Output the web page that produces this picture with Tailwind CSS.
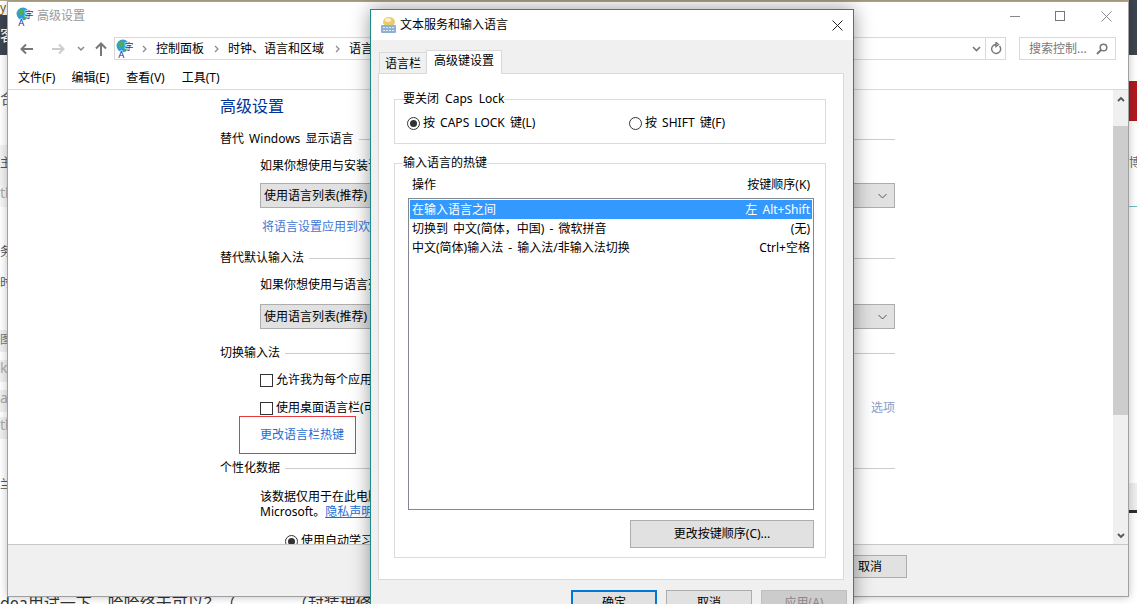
<!DOCTYPE html>
<html lang="en">
<head>
    <meta charset="UTF-8">
    <title>高级设置</title>
    <script src="https://cdn.jsdelivr.net/npm/@tailwindcss/browser@4"></script>
</head>
<body class="relative w-[1137px] h-[604px] overflow-hidden bg-white text-[12px] leading-[16px] text-black font-['Noto_Sans','Noto_Sans_CJK_SC',sans-serif]">

    <!-- page behind the windows -->
    <div class="absolute left-0 top-0 w-[1137px] h-[1px] bg-[#b8ab8e]"></div>
    <div class="absolute left-0 top-0 w-[8px] overflow-hidden text-[#7a5a20]">y</div>
    <div class="absolute left-0 top-[15px] w-[8px] h-[40px] bg-[#3c4550] overflow-hidden text-[16px] text-white pt-[12px]">客</div>
    <div class="absolute left-0 top-[90px] w-[8px] text-[16px] text-[#666] overflow-hidden">合</div>
    <div class="absolute left-0 top-[145px] w-[8px] h-[40px] overflow-hidden text-[#555] bg-[#f2f2f2] pt-[10px]">主</div>
    <div class="absolute left-0 top-[185px] w-[8px] h-[22px] overflow-hidden text-[14px] text-[#aaa] bg-[#f5f5f5]">th</div>
    <div class="absolute left-0 top-[244px] w-[8px] overflow-hidden text-[#555]">务</div>
    <div class="absolute left-0 top-[275px] w-[8px] overflow-hidden text-[#555]">时</div>
    <div class="absolute left-0 top-[330px] w-[8px] h-[22px] overflow-hidden text-[#777] bg-[#f0f0f0] pt-[2px]">图</div>
    <div class="absolute left-0 top-[360px] w-[8px] h-[22px] overflow-hidden text-[14px] text-[#aaa] bg-[#f0f0f0]">k</div>
    <div class="absolute left-0 top-[390px] w-[8px] h-[22px] overflow-hidden text-[14px] text-[#aaa] bg-[#f0f0f0]">a</div>
    <div class="absolute left-0 top-[417px] w-[8px] h-[22px] overflow-hidden text-[14px] text-[#aaa] bg-[#f0f0f0]">th</div>
    <div class="absolute left-0 top-[477px] w-[8px] overflow-hidden text-[#555]">兰</div>
    <div class="absolute left-[1129px] top-0 w-[8px] h-[55px] bg-[#3c4550]"></div>
    <div class="absolute left-[1129px] top-[81px] w-[8px] h-[40px] bg-[#b01a20]"></div>
    <div class="absolute left-[1129px] top-[155px] w-[8px] overflow-hidden text-[#666]">博</div>
    <div class="absolute left-[1129px] top-[206px] w-[8px] h-[1px] bg-[#6fc0bd]"></div>
    <div class="absolute left-[1129px] top-[483px] w-[8px] h-[27px] bg-[#eeeeee]"></div>
    <div class="absolute left-[1129px] top-[510px] w-[8px] h-[3px] bg-[#26323a]"></div>
    <div class="absolute left-0 top-[593px] w-[370px] text-[16px] leading-[20px] text-[#333] whitespace-nowrap">dea用试一下，哈哈终于可以？（<span class="ml-[64px]">（封装理修</span></div>

    <!-- control panel window -->
    <div class="absolute left-[7px] top-[1px] w-[1122px] h-[596px] bg-white border border-[#a0a0a0] shadow-[0_0_8px_rgba(0,0,0,0.25)] flex flex-col">
        <div class="h-[28px] shrink-0 flex items-center pl-[8px]">
            <svg class="w-[18px] h-[19px]" viewBox="0 0 17 18"><circle cx="6.500" cy="6.500" r="6" fill="#2f9be0"/><path d="M2 4l3-3 3 2-2 4-3 1zM7 9l3-1 1 2-3 2z" fill="#4cb050"/><text x="8" y="10" font-size="8.500" fill="#1033a8" stroke="#fff" stroke-width="1" paint-order="stroke">字</text><text x="2" y="18" font-size="9" fill="#1033a8" stroke="#fff" stroke-width="1" paint-order="stroke">A</text></svg>
            <span class="ml-[3px] text-[#999]">高级设置</span>
            <div class="ml-auto flex items-center">
                <div class="w-[10px] h-[1px] bg-[#888] mr-[35px]"></div>
                <div class="w-[10px] h-[10px] border border-[#777] mr-[36px]"></div>
                <svg class="w-[11px] h-[11px] mr-[16px]" viewBox="0 0 11 11"><path d="M.5.5l10 10M10.5.5l-10 10" stroke="#888"/></svg>
            </div>
        </div>
        <div class="h-[25px] shrink-0 flex items-center pl-[12px] pr-[8px] mt-[6px]">
            <svg class="w-[14px] h-[12px]" viewBox="0 0 14 12"><path d="M13 6H2M6 1.500L1.500 6 6 10.500" fill="none" stroke="#777" stroke-width="2"/></svg>
            <svg class="w-[14px] h-[12px] ml-[17px]" viewBox="0 0 14 12"><path d="M1 6h11M8 1.500L12.500 6 8 10.500" fill="none" stroke="#ccc" stroke-width="2"/></svg>
            <svg class="w-[8px] h-[6px] ml-[12px]" viewBox="0 0 8 6"><path d="M1 1l3 3 3-3" fill="none" stroke="#888" stroke-width="1.500"/></svg>
            <svg class="w-[12px] h-[14px] ml-[10px]" viewBox="0 0 12 14"><path d="M6 14V2M1 6.500L6 1.500l5 5" fill="none" stroke="#777" stroke-width="2"/></svg>
            <div class="ml-[7px] h-[23px] w-[892px] border border-[#d9d9d9] flex items-center">
                <svg class="w-[18px] h-[19px] ml-[1px]" viewBox="0 0 17 18"><circle cx="6.500" cy="6.500" r="6" fill="#2f9be0"/><path d="M2 4l3-3 3 2-2 4-3 1zM7 9l3-1 1 2-3 2z" fill="#4cb050"/><text x="8" y="10" font-size="8.500" fill="#1033a8" stroke="#fff" stroke-width="1" paint-order="stroke">字</text><text x="2" y="18" font-size="9" fill="#1033a8" stroke="#fff" stroke-width="1" paint-order="stroke">A</text></svg>
                <svg class="w-[5px] h-[8px] ml-[8px]" viewBox="0 0 5 8"><path d="M1 1l3 3-3 3" fill="none" stroke="#888" stroke-width="1.200"/></svg>
                <span class="ml-[9px]">控制面板</span>
                <svg class="w-[5px] h-[8px] ml-[10px]" viewBox="0 0 5 8"><path d="M1 1l3 3-3 3" fill="none" stroke="#888" stroke-width="1.200"/></svg>
                <span class="ml-[9px]">时钟、语言和区域</span>
                <svg class="w-[5px] h-[8px] ml-[11px]" viewBox="0 0 5 8"><path d="M1 1l3 3-3 3" fill="none" stroke="#888" stroke-width="1.200"/></svg>
                <span class="ml-[9px]">语言</span>
                <svg class="w-[9px] h-[6px] ml-auto mr-[4px]" viewBox="0 0 9 6"><path d="M1 1l3.500 3.500L8 1" fill="none" stroke="#777" stroke-width="1.600"/></svg>
                <div class="w-[20px] h-full border-l border-[#d9d9d9] flex items-center justify-center">
                    <svg class="w-[12px] h-[13px]" viewBox="0 0 12 13"><path d="M9.500 4A4.500 4.500 0 1 1 6 2.500M6 .5v4l2.500-2z" fill="none" stroke="#777" stroke-width="1.400"/></svg>
                </div>
            </div>
            <div class="ml-[13px] h-[23px] w-[97px] border border-[#d9d9d9] flex items-center pl-[9px] text-[#777]">
                搜索控制...
                <svg class="w-[12px] h-[12px] ml-auto mr-[7px]" viewBox="0 0 12 12"><circle cx="7.500" cy="4.500" r="3.300" fill="none" stroke="#777" stroke-width="1.500"/><path d="M5 7l-4 4" stroke="#777" stroke-width="2"/></svg>
            </div>
        </div>
        <div class="h-[29px] shrink-0 flex items-center pl-[10px] pt-[5px] gap-[17px] border-b border-[#d9d9d9]">
            <span>文件(F)</span><span class="-ml-[1px]">编辑(E)</span><span>查看(V)</span><span>工具(T)</span>
        </div>

        <div class="flex-1 min-h-0 flex">
            <div class="flex-1 min-w-0 overflow-hidden relative pl-[212px] pr-[218px] pt-[6px]">
                <h1 class="text-[16px] leading-[20px] text-[#003399]">高级设置</h1>
                <div class="mt-[15px] flex items-center gap-[5px]"><span class="whitespace-nowrap [word-spacing:2px]">替代 Windows 显示语言</span><div class="flex-1 h-[1px] bg-[#ccc]"></div></div>
                <p class="ml-[40px] mt-[11px] whitespace-nowrap">如果你想使用与安装语言不同的显示语言</p>
                <div class="ml-[40px] mt-[9px] h-[25px] border border-[#adadad] bg-[#e1e1e1] flex items-center pl-[3px] pr-[7px] justify-between">使用语言列表(推荐)
                    <svg class="w-[9px] h-[6px]" viewBox="0 0 9 6"><path d="M.5 1l4 4 4-4" fill="none" stroke="#555"/></svg>
                </div>
                <p class="ml-[42px] mt-[11px] text-[#3f76d6] whitespace-nowrap">将语言设置应用到欢迎屏幕</p>
                <div class="mt-[15px] flex items-center gap-[5px]"><span>替代默认输入法</span><div class="flex-1 h-[1px] bg-[#ccc]"></div></div>
                <p class="ml-[40px] mt-[11px] whitespace-nowrap">如果你想使用与语言列表不同的输入法</p>
                <div class="ml-[40px] mt-[11px] h-[25px] border border-[#adadad] bg-[#e1e1e1] flex items-center pl-[3px] pr-[7px] justify-between">使用语言列表(推荐)
                    <svg class="w-[9px] h-[6px]" viewBox="0 0 9 6"><path d="M.5 1l4 4 4-4" fill="none" stroke="#555"/></svg>
                </div>
                <div class="mt-[16px] flex items-center gap-[5px]"><span>切换输入法</span><div class="flex-1 h-[1px] bg-[#ccc]"></div></div>
                <label class="ml-[40px] mt-[11px] flex items-center whitespace-nowrap"><span class="w-[13px] h-[13px] border border-[#333] mr-[3px]"></span>允许我为每个应用窗口设置不同的输入法</label>
                <div class="ml-[40px] mt-[12px] flex items-center whitespace-nowrap"><span class="w-[13px] h-[13px] border border-[#333] mr-[3px]"></span>使用桌面语言栏(可用时)<span class="ml-auto text-[#8a9cc4]">选项</span></div>
                <div class="absolute left-[231px] top-[326px] w-[117px] h-[38px] border border-[#e8393d] pl-[20px] pt-[10px] text-[#1a6fd6] whitespace-nowrap">更改语言栏热键</div>
                <div class="mt-[44px] flex items-center gap-[5px]"><span>个性化数据</span><div class="flex-1 h-[1px] bg-[#ccc]"></div></div>
                <p class="ml-[40px] mt-[13px] whitespace-nowrap">该数据仅用于在此电脑上改善手写识别和文本预测结果，不会发送到</p>
                <p class="ml-[40px] whitespace-nowrap -mt-[1px]">Microsoft。<span class="text-[#1a6fd6] underline">隐私声明</span></p>
                <label class="ml-[65px] mt-[13px] flex items-center whitespace-nowrap"><span class="w-[13px] h-[13px] rounded-full border border-[#333] mr-[3px] flex items-center justify-center"><span class="w-[7px] h-[7px] rounded-full bg-[#333]"></span></span>使用自动学习(推荐)</label>
            </div>
            <div class="w-[15px] shrink-0 bg-[#f0f0f0] flex flex-col items-center">
                <div class="h-[36px] shrink-0 w-full flex items-center justify-center pb-[18px]">
                    <svg class="w-[8px] h-[6px]" viewBox="0 0 8 6"><path d="M1 5l3-3 3 3" fill="none" stroke="#555" stroke-width="1.800"/></svg>
                </div>
                <div class="h-[289px] w-full bg-[#cdcdcd]"></div>
                <div class="mt-auto h-[16px] flex items-center">
                    <svg class="w-[8px] h-[6px]" viewBox="0 0 8 6"><path d="M1 1l3 3 3-3" fill="none" stroke="#555" stroke-width="1.800"/></svg>
                </div>
            </div>
        </div>

        <div class="h-[52px] shrink-0 bg-[#f0f0f0] border-t border-[#c8c8c8] flex items-start justify-end pt-[10px] pr-[221px]">
            <div class="w-[100px] h-[23px] border border-[#adadad] bg-[#e1e1e1] flex items-center justify-end pr-[24px]">取消</div>
        </div>
    </div>

    <!-- dialog on top -->
    <div class="absolute left-[370px] top-[9px] w-[484px] h-[600px] bg-[#f0f0f0] border border-[#1a8a8c] border-b-0 shadow-[0_0_18px_rgba(0,0,0,0.4)] flex flex-col">
        <div class="h-[30px] shrink-0 bg-white flex items-center pl-[9px]">
            <svg class="w-[17px] h-[18px]" viewBox="0 0 17 18"><ellipse cx="9" cy="6" rx="6" ry="5" fill="#eccb6d"/><ellipse cx="8" cy="4" rx="3" ry="2" fill="#fbf0c4"/><rect x="1" y="9" width="15" height="8" rx="1" fill="#8fb0d6"/><path d="M3 11.500h11M3 14.500h11" stroke="#dfeaf5" stroke-dasharray="2 1"/></svg>
            <span class="ml-[3px]">文本服务和输入语言</span>
            <svg class="w-[11px] h-[11px] ml-auto mr-[10px]" viewBox="0 0 11 11"><path d="M.5.5l10 10M10.5.5l-10 10" stroke="#222"/></svg>
        </div>
        <div class="flex items-end h-[33px] shrink-0 pl-[8px] relative z-10">
            <div class="h-[21px] w-[48px] border border-[#d9d9d9] border-b-0 bg-[#f0f0f0] flex items-center justify-center pt-[2px]">语言栏</div>
            <div class="h-[24px] w-[76px] -ml-[1px] border border-[#d9d9d9] border-b-white bg-white flex items-center justify-center -mb-[1px] pb-[2px]">高级键设置</div>
        </div>
        <div class="mx-[7px] w-[466px] h-[507px] shrink-0 bg-white border border-[#d9d9d9] pl-[15px] pr-[17px] pt-[17px]">
            <fieldset class="border border-[#dcdcdc] h-[53px] px-[8px]">
                <legend class="px-0 [word-spacing:3px]">要关闭 Caps Lock</legend>
                <div class="flex items-center mt-[8px] ml-[4px]">
                    <span class="w-[13px] h-[13px] rounded-full border border-[#333] flex items-center justify-center"><span class="w-[7px] h-[7px] rounded-full bg-[#333]"></span></span>
                    <span class="ml-[3px] w-[206px] [word-spacing:2px]">按 CAPS LOCK 键(L)</span>
                    <span class="w-[13px] h-[13px] rounded-full border border-[#333]"></span>
                    <span class="ml-[3px] [word-spacing:2px]">按 SHIFT 键(F)</span>
                </div>
            </fieldset>
            <fieldset class="border border-[#dcdcdc] h-[403px] mt-[11px] pl-[13px] pr-[11px]">
                <legend class="-ml-[5px]">输入语言的热键</legend>
                <div class="flex justify-between px-[4px] pt-[6px] -mr-[1px]"><span>操作</span><span class="mr-[1px]">按键顺序(K)</span></div>
                <div class="mt-[5px] h-[312px] border border-[#828790] p-[1px]">
                    <div class="h-[19px] px-[2px] bg-[#3399ff] text-white flex items-center justify-between [word-spacing:2px]"><span>在输入语言之间</span><span>左 Alt+Shift</span></div>
                    <div class="h-[19px] px-[2px] flex items-center justify-between [word-spacing:2px]"><span>切换到 中文(简体，中国) - 微软拼音</span><span>(无)</span></div>
                    <div class="h-[19px] px-[2px] flex items-center justify-between [word-spacing:2px]"><span>中文(简体)输入法 - 输入法/非输入法切换</span><span>Ctrl+空格</span></div>
                </div>
                <div class="flex justify-end mt-[10px]">
                    <div class="w-[184px] h-[28px] border border-[#adadad] bg-[#e1e1e1] flex items-center justify-center">更改按键顺序(C)...</div>
                </div>
            </fieldset>
        </div>
        <div class="flex pl-[200px] gap-[9px] pt-[10px] items-start">
            <div class="w-[86px] h-[25px] border-2 border-[#0078d7] bg-[#e1e1e1] flex items-center justify-center">确定</div>
            <div class="w-[86px] h-[25px] border border-[#adadad] bg-[#e1e1e1] flex items-center justify-center">取消</div>
            <div class="w-[86px] h-[25px] border border-[#bfbfbf] bg-[#cccccc] text-[#888] flex items-center justify-center">应用(A)</div>
        </div>
    </div>
</body>
</html>
